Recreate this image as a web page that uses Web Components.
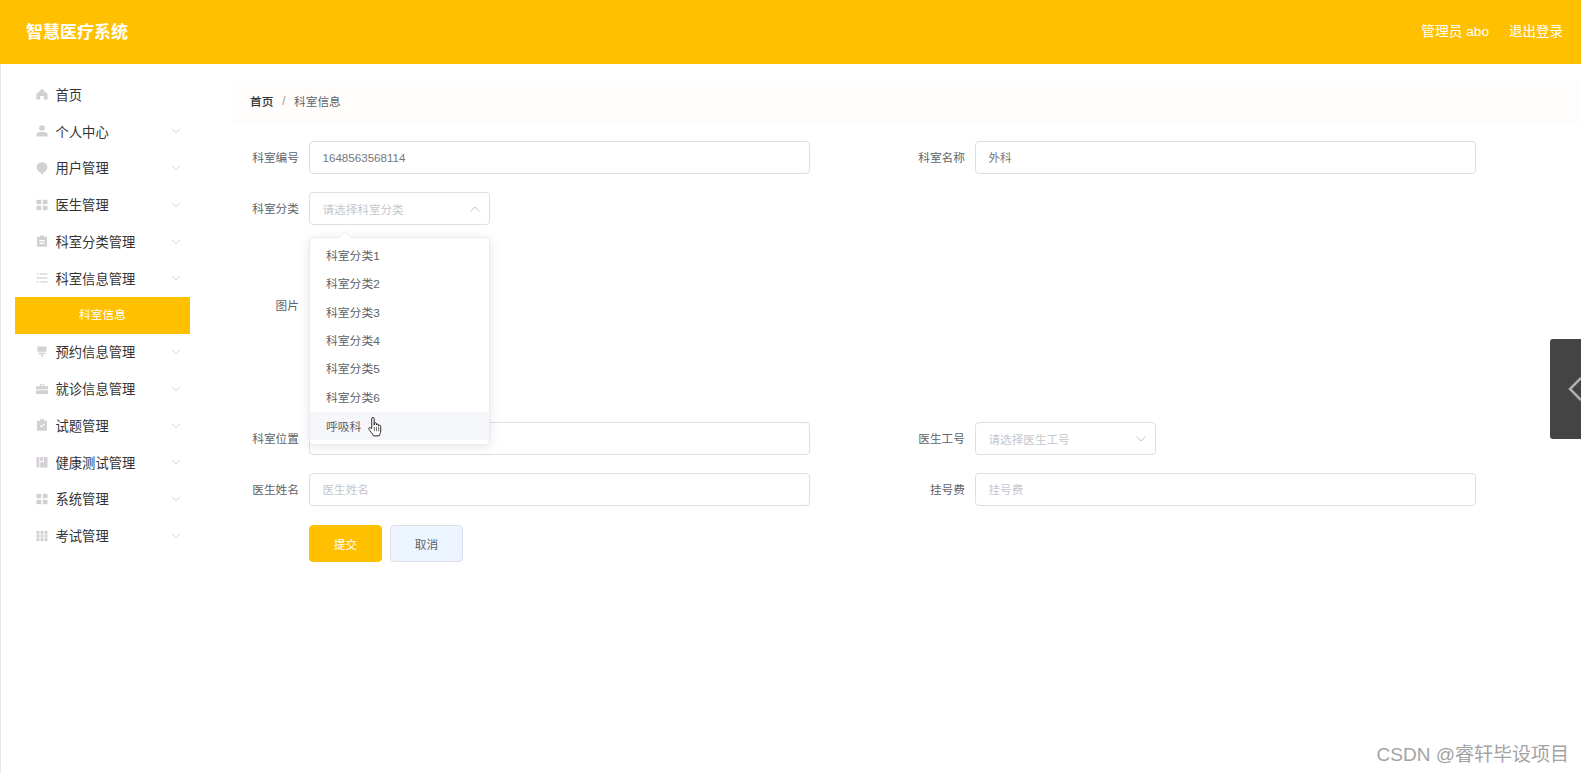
<!DOCTYPE html>
<html lang="zh"><head><meta charset="utf-8"><title>智慧医疗系统</title>
<style>
html,body{margin:0;height:100%;overflow:hidden;background:#fff}
body{font-family:"Liberation Sans","Noto Sans CJK SC",sans-serif;color:#333}
</style></head><body>
<app-shell>
  <app-header slot="header" title-text="智慧医疗系统" user="管理员 abo" logout="退出登录"></app-header>
  <side-menu slot="side">
    <menu-item icon="home" leaf>首页</menu-item>
    <menu-item icon="user">个人中心</menu-item>
    <menu-item icon="pin">用户管理</menu-item>
    <menu-item icon="grid">医生管理</menu-item>
    <menu-item icon="clip">科室分类管理</menu-item>
    <menu-item icon="list">科室信息管理</menu-item>
    <sub-item>科室信息</sub-item>
    <menu-item icon="stamp">预约信息管理</menu-item>
    <menu-item icon="case">就诊信息管理</menu-item>
    <menu-item icon="check">试题管理</menu-item>
    <menu-item icon="chart">健康测试管理</menu-item>
    <menu-item icon="grid">系统管理</menu-item>
    <menu-item icon="dots">考试管理</menu-item>
  </side-menu>
  <bread-crumb home="首页" current="科室信息"></bread-crumb>
  <info-form>
    <form-field label="科室编号"><text-input value="1648563568114"></text-input></form-field>
    <form-field label="科室名称"><text-input value="外科"></text-input></form-field>
    <form-field label="科室分类"><select-box placeholder="请选择科室分类" open style="width:181px"></select-box></form-field>
    <form-spacer></form-spacer>
    <form-field label="图片" tall></form-field>
    <form-spacer></form-spacer>
    <form-field label="科室位置"><text-input></text-input></form-field>
    <form-field label="医生工号"><select-box placeholder="请选择医生工号" style="width:181px"></select-box></form-field>
    <form-field label="医生姓名"><text-input placeholder="医生姓名"></text-input></form-field>
    <form-field label="挂号费"><text-input placeholder="挂号费"></text-input></form-field>
    <form-field label=""><div style="display:flex;gap:8px;margin-top:1px"><app-button primary>提交</app-button><app-button>取消</app-button></div></form-field>
    <drop-list slot="overlay"></drop-list>
  </info-form>
  <side-handle slot="overlay"></side-handle>
  <water-mark slot="overlay">CSDN @睿轩毕设项目</water-mark>
</app-shell>
<script>
const FONT='"Liberation Sans","Noto Sans CJK SC",sans-serif';
const ICONS={
home:'<path d="M6 .8 .4 6v5.400h3.800V8h3.600v3.400h3.800V6z"/>',
user:'<circle cx="6" cy="3" r="2.800"/><path d="M.5 11.500V9.600C.5 7.800 2 6.900 3.500 6.900h5c1.500 0 3 .9 3 2.700v1.900z"/>',
pin:'<path d="M6 .2C2.700.2.600 2.500.600 5.200c0 2.600 2.500 5 4.600 5.900l-.5 1.200h2.600l-.5-1.200c2.100-.9 4.600-3.300 4.600-5.900C11.400 2.500 9.300.2 6 .2z"/>',
grid:'<rect x=".5" y=".8" width="4.700" height="4.400"/><rect x="6.800" y=".8" width="4.700" height="4.400"/><rect x=".5" y="6.800" width="4.700" height="4.400"/><rect x="6.800" y="6.800" width="4.700" height="4.400"/>',
clip:'<path fill-rule="evenodd" d="M4 .4h4v1.300h3v10.100H1V1.700h3zM3.300 5v1.200h5.400V5zM3.300 7.800V9h5.400V7.800z"/>',
list:'<rect x=".5" y="1.500" width="2.200" height="1.200"/><rect x="4" y="1.500" width="7.500" height="1.200"/><rect x=".5" y="5.400" width="11" height="1.200"/><rect x=".5" y="9.300" width="2.200" height="1.200"/><rect x="4" y="9.300" width="7.500" height="1.200"/>',
stamp:'<path d="M1.500 .5h9v5.300h-9zM2.500 6.800h7V8.300h-7zM4.700 8.800h2.600L6 12z"/>',
case:'<path fill-rule="evenodd" d="M3.800 3.300V1.300h4.400v2h3.800v3H0v-3zM5 3.300h2v-1H5zM0 7.200h12V11H0z"/>',
check:'<path fill-rule="evenodd" d="M4 .3h4v1.400h3v10.100H1V1.700h3zM3.500 6.600l2 2 3.200-3.300-.8-.7-2.400 2.500-1.200-1.200z"/>',
chart:'<path d="M.5 1h2.800v10.500H.5zM4.200 1h3v4.500l-1.500-1-1.500 1zM8 1h3.500v10.500H4.200V6.500l1.500-.8 2.300 1.300z"/>',
dots:'<g><rect x=".5" y=".8" width="3" height="3"/><rect x="4.500" y=".8" width="3" height="3"/><rect x="8.500" y=".8" width="3" height="3"/><rect x=".5" y="4.500" width="3" height="3"/><rect x="4.500" y="4.500" width="3" height="3"/><rect x="8.500" y="4.500" width="3" height="3"/><rect x=".5" y="8.200" width="3" height="3"/><rect x="4.500" y="8.200" width="3" height="3"/><rect x="8.500" y="8.200" width="3" height="3"/></g>'
};
function def(name,html,cls){
  const t=document.createElement('template');t.innerHTML=html;
  customElements.define(name,class extends HTMLElement{
    constructor(){super();this.attachShadow({mode:'open'}).appendChild(t.content.cloneNode(true));}
    connectedCallback(){cls&&cls.call(this,this.shadowRoot);}
  });
}
def('app-shell',`<style>
:host{display:block;width:1581px;height:773px;position:relative;overflow:hidden;font-family:${FONT}}
.body{display:flex;height:709px;border-left:1px solid #e6e6e6;box-sizing:border-box}
.main{flex:1;min-width:0;padding-top:17px}
</style><slot name="header"></slot><div class="body"><slot name="side"></slot><div class="main"><slot></slot></div></div><slot name="overlay"></slot>`);
def('app-header',`<style>
:host{display:flex;align-items:center;justify-content:space-between;height:64px;background:#ffc000;color:#fff;padding:0 18px 4px 26px;box-sizing:border-box}
.t{font-size:17px;font-weight:700}
.r{display:flex;gap:20px;font-size:13.500px;font-family:"Liberation Sans","Noto Sans CJK SC",sans-serif}
.u{font-size:13.700px}
</style><div class="t"></div><div class="r"><span class="u"></span><span class="l"></span></div>`,function(s){
s.querySelector('.t').textContent=this.getAttribute('title-text');
s.querySelector('.u').textContent=this.getAttribute('user');
s.querySelector('.l').textContent=this.getAttribute('logout');});
def('side-menu',`<style>:host{display:flex;flex-direction:column;width:231px;flex:none;box-sizing:border-box;padding:12px 0 0 14px}</style><slot></slot>`);
def('menu-item',`<style>
:host{display:flex;align-items:center;width:175px;height:36.750px;font-size:13.300px;color:#333;position:relative;box-sizing:border-box;padding-left:21px}
svg.i{width:12px;height:12px;fill:#d3cfd4;flex:none;margin-right:7.500px}
svg.c{position:absolute;left:156px;top:15.500px;width:10px;height:6px;fill:none;stroke:#d5d5d8;stroke-width:1}
</style><svg class="i" viewBox="0 0 12 12"></svg><span><slot></slot></span><svg class="c" viewBox="0 0 10 6"><path d="M1 .8 5 4.800 9 .8"/></svg>`,function(s){
s.querySelector('.i').innerHTML=ICONS[this.getAttribute('icon')];
if(this.hasAttribute('leaf'))s.querySelector('.c').style.display='none';});
def('sub-item',`<style>:host{display:flex;align-items:center;justify-content:center;width:175px;height:37px;box-sizing:border-box;padding-bottom:3px;background:#ffc000;color:#fff;font-size:11.700px}</style><slot></slot>`);
def('bread-crumb',`<style>
:host{display:flex;align-items:center;height:42px;padding:0 0 4px 18px;box-sizing:border-box;background:#fffdfb;font-size:11.700px;border-radius:4px 0 0 4px;margin-bottom:18px}
b{font-weight:500;color:#303133}i{font-style:normal;color:#a0a3aa;margin:0 8.500px;font-size:13px}span{color:#606266}
</style><b></b><i>/</i><span></span>`,function(s){
s.querySelector('b').textContent=this.getAttribute('home');
s.querySelector('span').textContent=this.getAttribute('current');});
def('info-form',`<style>
:host{display:grid;grid-template-columns:666px 666px;row-gap:18px;position:relative}
</style><slot></slot><slot name="overlay"></slot>`);
def('form-spacer',`<style>:host{display:block}</style>`);
def('form-field',`<style>
:host{display:flex;min-height:33px;padding-right:88px;box-sizing:border-box;gap:10px;color:#606266;font-size:11.700px}
.l{width:67px;flex:none;text-align:right;line-height:33px}
.c{flex:1;min-width:0}
:host([tall]){height:161px}
:host([tall]) .l{line-height:125px}
</style><div class="l"></div><div class="c"><slot></slot></div>`,function(s){s.querySelector('.l').textContent=this.getAttribute('label');});
def('text-input',`<style>
:host{display:flex;align-items:center;height:33px;border:1px solid #dcdfe6;border-radius:4px;box-sizing:border-box;padding:0 12.500px 1px;font-size:11.600px;color:#767880;background:#fff}
.p{color:#c4c7ce}
</style><span></span>`,function(s){const e=s.querySelector('span');
if(this.hasAttribute('value'))e.textContent=this.getAttribute('value');
else{e.textContent=this.getAttribute('placeholder')||'';e.className='p';}});
def('select-box',`<style>
:host{display:flex;align-items:center;justify-content:space-between;height:33px;border:1px solid #dcdfe6;border-radius:4px;box-sizing:border-box;padding:0 9px 0 12.500px;font-size:11.600px;color:#c4c7ce;background:#fff}
svg{width:10px;height:6px;fill:none;stroke:#c0c4cc;stroke-width:1}
:host([open]) svg{transform:rotate(180deg)}
</style><span></span><svg viewBox="0 0 10 6"><path d="M.5.5 5 5 9.500.5"/></svg>`,function(s){s.querySelector('span').textContent=this.getAttribute('placeholder');});
def('app-button',`<style>
:host{display:flex;align-items:center;justify-content:center;width:73px;height:37px;box-sizing:border-box;border-radius:4px;border:1px solid #dcdfe6;background:#ecf5ff;color:#606266;font-size:11.700px}
:host([primary]){background:#ffc000;border-color:#ffc000;color:#fff}
</style><slot></slot>`);
def('drop-list',`<style>
:host{position:absolute;left:77px;top:96px;width:181px;height:208px;box-sizing:border-box;background:#fff;border:1px solid #e9ebef;border-radius:4px;box-shadow:0 2px 12px rgba(0,0,0,.1);padding:4px 0 0;font-size:11.800px;color:#606266}
.a{position:absolute;left:29px;top:-6px;width:0;height:0;border:6px solid transparent;border-top:0;border-bottom-color:#fff;filter:drop-shadow(0 -1px 0 #e9ebef)}
.o{display:flex;align-items:center;height:28.300px;box-sizing:border-box;padding:0 0 3px 16px;position:relative}
.h{background:#f5f7fa;padding-bottom:1px}
svg{position:absolute;left:58px;top:4px;width:16px;height:22px}
</style><div class="a"></div>
<div class="o">科室分类1</div><div class="o">科室分类2</div><div class="o">科室分类3</div><div class="o">科室分类4</div><div class="o">科室分类5</div><div class="o">科室分类6</div>
<div class="o h">呼吸科<svg viewBox="0 0 15 20"><path d="M3.500 11.500V2.200c0-1.600 2.300-1.600 2.300 0v6l0-1.300c0-1.300 2.100-1.300 2.100 0v1.300c0-1.200 2-1.200 2 0v1c0-1.100 2-1.100 2 .1v4.500c0 2-1 3-1.400 4.500H5.200C4.600 16.500 1.800 14 .9 12.200c-.7-1.400.7-2.300 1.600-1.300z" fill="#fff" stroke="#222" stroke-width=".9" stroke-linejoin="round"/><path d="M6 10v4M8 10v4M10 10v4" stroke="#222" stroke-width=".6"/></svg></div>`);
def('side-handle',`<style>
:host{position:absolute;left:1550px;top:339px;width:31px;height:100px;background:#444;border-radius:3px 0 0 3px;display:block}
svg{position:absolute;left:18px;top:37px;width:13px;height:26px;fill:none;stroke:#b0b0b0;stroke-width:2.500}
</style><svg viewBox="0 0 13 26"><path d="M13 2 2 13 13 24"/></svg>`);
def('water-mark',`<style>
:host{position:absolute;right:12px;top:742px;font-size:19px;line-height:26px;color:#a3a3a3;font-family:"Liberation Sans","Noto Sans CJK SC",sans-serif;display:block}
</style><slot></slot>`);
</script>
</body></html>
